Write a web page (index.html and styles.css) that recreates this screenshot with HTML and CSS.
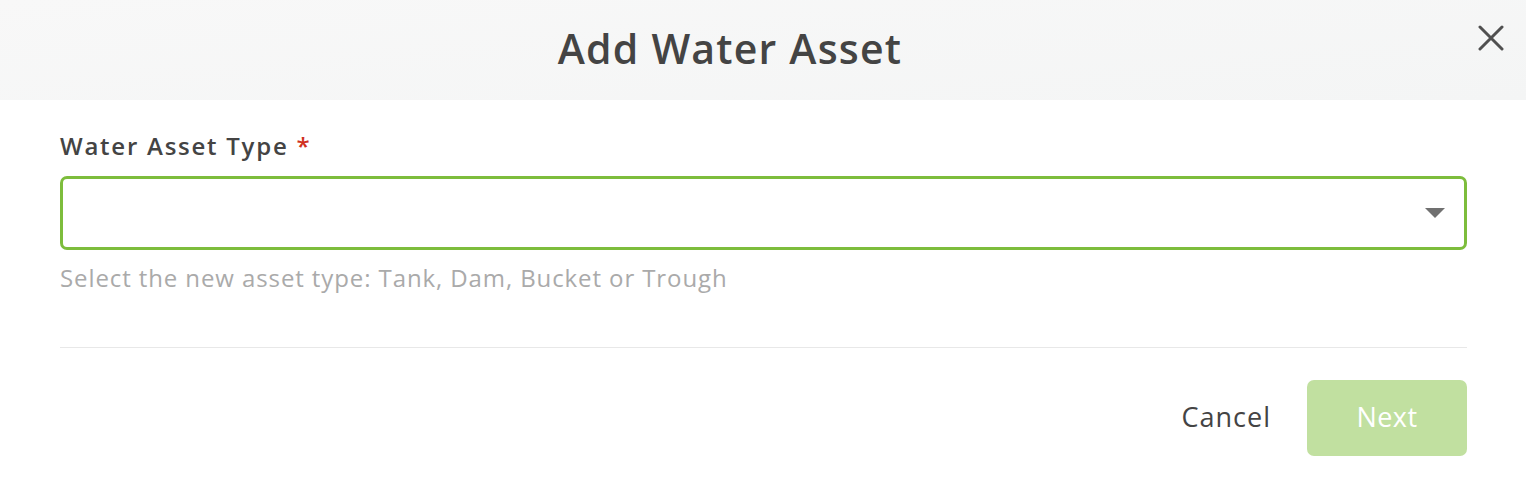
FILE: index.html
```html
<!DOCTYPE html>
<html lang="en">
<head>
<meta charset="utf-8">
<title>Add Water Asset</title>
<link rel="stylesheet" href="styles.css">
</head>
<body>
<div class="modal">
  <header class="modal-header">
    <h1 class="modal-title">Add Water Asset</h1>
    <button class="close-btn" aria-label="Close">
      <svg width="26" height="26" viewBox="0 0 26 26"><path d="M2 2 L24 24 M24 2 L2 24" stroke="#505050" stroke-width="3" stroke-linecap="round" fill="none"/></svg>
    </button>
  </header>
  <div class="modal-body">
    <label class="field-label">Water Asset Type <span class="req">*</span></label>
    <div class="select">
      <span class="caret"></span>
    </div>
    <p class="hint">Select the new asset type: Tank, Dam, Bucket or Trough</p>
    <hr class="divider">
    <div class="actions">
      <button class="btn-cancel">Cancel</button>
      <button class="btn-next">Next</button>
    </div>
  </div>
</div>
</body>
</html>
```
FILE: styles.css
```css
* { box-sizing: border-box; }
html, body { margin: 0; padding: 0; background: #fff; }
body { font-family: "Open Sans", "Liberation Sans", sans-serif; color: #444; }

.modal { width: 1526px; height: 482px; background: #fff; }

.modal-header {
  height: 100px;
  background: linear-gradient(175deg, #f8f8f8 0%, #f4f5f5 100%);
  display: flex;
  align-items: center;
  position: relative;
}
.modal-title {
  flex: 1;
  margin: 0 0 4px;
  padding-right: 66px;
  text-align: center;
  font-size: 41px;
  font-weight: 600;
  color: #444;
  letter-spacing: 1.2px;
}
.close-btn {
  position: absolute;
  right: 22px;
  top: 25px;
  width: 26px;
  height: 26px;
  padding: 0;
  border: 0;
  background: transparent;
  display: flex;
}

.modal-body { padding: 26px 59px 0 60px; }

.field-label {
  display: block;
  font-size: 24px;
  font-weight: 600;
  color: #444;
  line-height: 40px;
  letter-spacing: 1.75px;
}
.req { color: #d0301e; }

.select {
  margin-top: 10px;
  height: 74px;
  border: 3px solid #7dbd3c;
  border-radius: 7px;
  display: flex;
  align-items: center;
  justify-content: flex-end;
  padding-right: 19px;
}
.caret {
  width: 0; height: 0;
  border-left: 10px solid transparent;
  border-right: 10px solid transparent;
  border-top: 10px solid #707070;
}

.hint {
  margin: 13px 0 0;
  font-size: 24px;
  font-weight: 400;
  color: #aaaaaa;
  line-height: 30px;
  letter-spacing: 0.9px;
}

.divider {
  margin: 54px 0 0;
  border: 0;
  border-top: 1px solid #e8e8e8;
  height: 0;
}

.actions {
  display: flex;
  justify-content: flex-end;
  align-items: center;
  margin-top: 32px;
}
.btn-cancel {
  font-family: inherit;
  background: none;
  border: 0;
  font-size: 27px;
  color: #444;
  padding: 0 0 3px;
  margin-right: 36px;
  letter-spacing: 1px;
}
.btn-next {
  font-family: inherit;
  width: 160px;
  height: 76px;
  background: #c1e0a0;
  border: 0;
  border-radius: 7px;
  color: #fff;
  font-size: 27px;
  letter-spacing: 0.5px;
  padding: 0 0 3px;
}
```
